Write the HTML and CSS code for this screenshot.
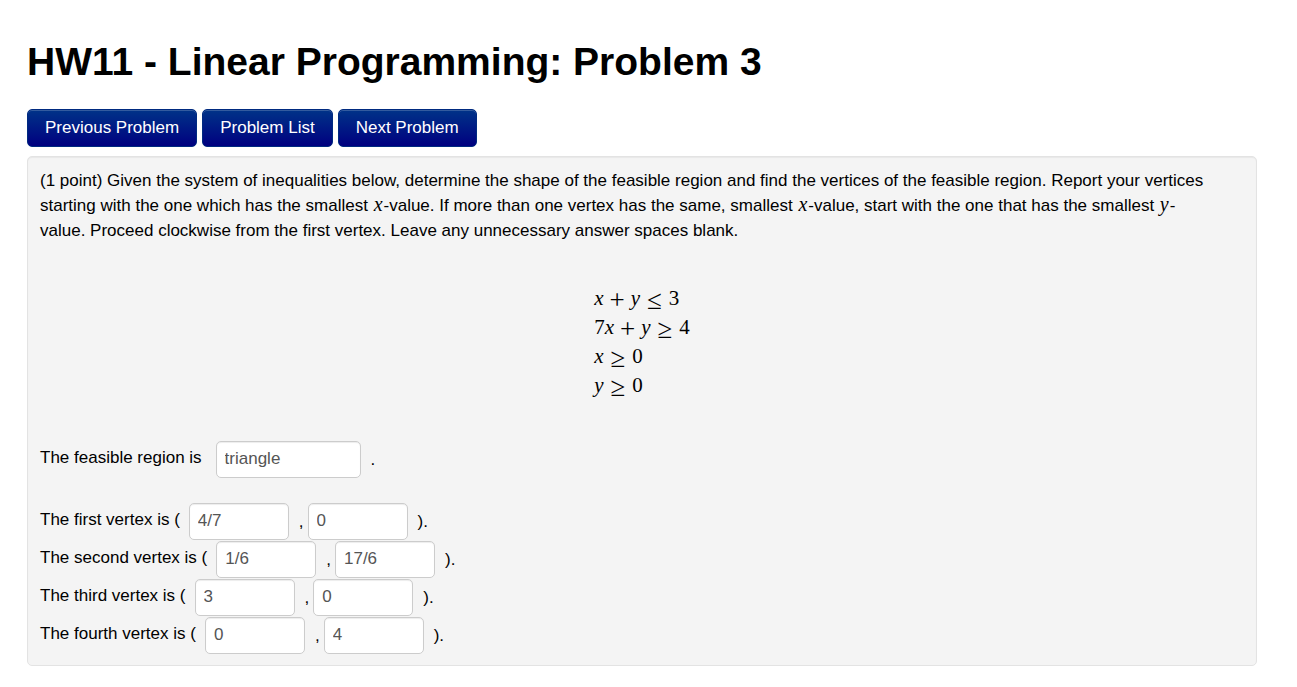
FILE: index.html
```
<!DOCTYPE html>
<html lang="en">
<head>
    <meta charset="UTF-8">
    <meta name="viewport" content="width=device-width, initial-scale=1.0">
    <title>HW11 - Linear Programming: Problem 3</title>
    <link rel="stylesheet" href="styles.css">
</head>
<body>
    <main>
        <h1>HW11 - Linear Programming: Problem 3</h1>
        <nav class="problem-nav">
            <a class="button" href="#previous">Previous Problem</a>
            <a class="button" href="#list">Problem List</a>
            <a class="button" href="#next">Next Problem</a>
        </nav>
        <form class="problem">
            <p class="statement">(1 point) Given the system of inequalities below, determine the shape of the feasible region and find the vertices of the feasible region. Report your vertices starting with the one which has the smallest <i class="var">x</i>-value. If more than one vertex has the same, smallest <i class="var">x</i>-value, start with the one that has the smallest <i class="var">y</i>-value. Proceed clockwise from the first vertex. Leave any unnecessary answer spaces blank.</p>

            <div class="system">
                <div><i>x</i><span class="op">+</span><i>y</i><span class="rel">≤</span>3</div>
                <div>7<i>x</i><span class="op">+</span><i>y</i><span class="rel">≥</span>4</div>
                <div><i>x</i><span class="rel">≥</span>0</div>
                <div><i>y</i><span class="rel">≥</span>0</div>
            </div>

            <div class="answer-row region">
                <label for="region">The feasible region is</label>
                <input type="text" class="wide" id="region" value="triangle">
                <span class="close">.</span>
            </div>

            <div class="answer-row">
                <label for="x1">The first vertex is (</label>
                <input type="text" id="x1" value="4/7">
                <span class="comma">,</span>
                <input type="text" id="y1" value="0" aria-label="First vertex y">
                <span class="close">).</span>
            </div>
            <div class="answer-row">
                <label for="x2">The second vertex is (</label>
                <input type="text" id="x2" value="1/6">
                <span class="comma">,</span>
                <input type="text" id="y2" value="17/6" aria-label="Second vertex y">
                <span class="close">).</span>
            </div>
            <div class="answer-row">
                <label for="x3">The third vertex is (</label>
                <input type="text" id="x3" value="3">
                <span class="comma">,</span>
                <input type="text" id="y3" value="0" aria-label="Third vertex y">
                <span class="close">).</span>
            </div>
            <div class="answer-row">
                <label for="x4">The fourth vertex is (</label>
                <input type="text" id="x4" value="0">
                <span class="comma">,</span>
                <input type="text" id="y4" value="4" aria-label="Fourth vertex y">
                <span class="close">).</span>
            </div>
        </form>
    </main>
</body>
</html>
```
FILE: styles.css
```
* {
    box-sizing: border-box;
}
body {
    margin: 0;
    background-color: #fff;
    color: #000;
    font-family: Arial, "Liberation Sans", sans-serif;
    font-size: 17px;
    line-height: 25px;
}
main {
    padding: 37px 40px 20px 27px;
}
h1 {
    margin: 0 0 22px;
    font-size: 39px;
    line-height: 50px;
}

.problem-nav {
    display: flex;
    gap: 5px;
    margin-bottom: 9px;
}
.button {
    padding: 5px 17px 6px;
    border: 1px solid #002a80;
    border-radius: 5px;
    background-image: linear-gradient(to bottom, #003388, #000080);
    box-shadow: inset 0 1px 0 rgba(255, 255, 255, 0.2);
    color: #fff;
    text-decoration: none;
}

.problem {
    padding: 11px 12px;
    border: 1px solid #e3e3e3;
    border-radius: 5px;
    background-color: #f4f4f4;
    box-shadow: inset 0 1px 1px rgba(0, 0, 0, 0.05);
}
.statement {
    margin: 0;
    padding-right: 24px;
}
.var {
    margin: 0 1px;
    font-family: "Liberation Serif", serif;
    font-size: 20px;
    line-height: 20px;
}

/* inequalities, left aligned inside a centered block */
.system {
    width: fit-content;
    margin: 41px auto 40px;
    font-family: "Liberation Serif", serif;
    font-size: 21px;
    line-height: 29px;
}
.op,
.rel {
    margin: 0 6px;
    font-size: 27px;
    line-height: 20px;
    vertical-align: middle;
}
.rel {
    margin: 0 7px;
}

.answer-row {
    display: flex;
    align-items: center;
    height: 38px;
}
.answer-row label {
    margin-right: 5px;
    padding-bottom: 3px;
}
.region {
    margin-bottom: 24px;
}
.region label {
    margin-right: 10px;
}
.answer-row input {
    width: 100px;
    height: 37px;
    margin-left: 4px;
    padding: 4px 8px;
    border: 1px solid #ccc;
    border-radius: 5px;
    background-color: #fff;
    box-shadow: inset 0 1px 1px rgba(0, 0, 0, 0.075);
    color: #555;
    font-family: inherit;
    font-size: 17px;
}
.answer-row .wide {
    width: 145px;
}
.comma,
.close {
    margin-left: 10px;
}
```
